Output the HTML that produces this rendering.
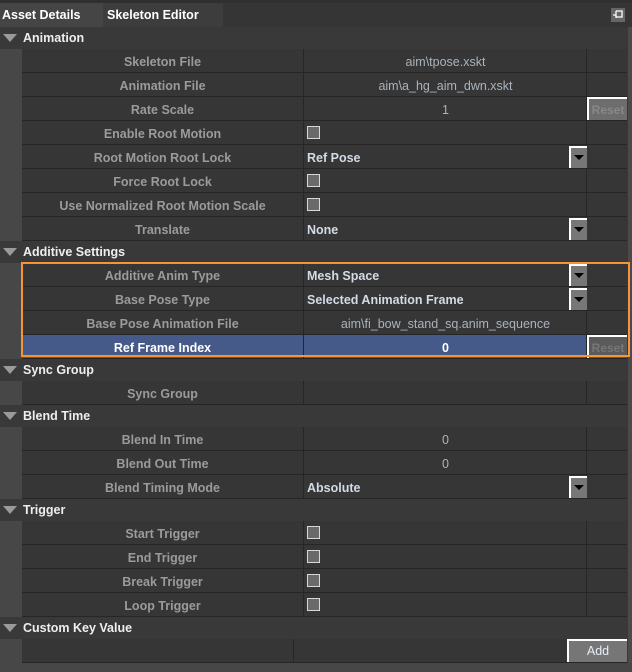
<!DOCTYPE html>
<html><head><style>
*{margin:0;padding:0;box-sizing:border-box}
body{width:632px;height:672px;background:#383838;font-family:"Liberation Sans","DejaVu Sans",sans-serif;font-size:12.5px;position:relative;overflow:hidden}
.a{position:absolute}
.tabs{left:0;top:0;width:632px;height:27px;background:#2f2f2f}
.hdr{left:0;width:628px;height:22px;background:#393939;color:#eee;font-weight:bold;line-height:22px;padding-left:23px;font-size:12.5px}
.hdr:before{content:"";position:absolute;left:3px;top:7px;border-left:7px solid transparent;border-right:7px solid transparent;border-top:8px solid #9a9a9a}
.gut{left:0;width:22px;background:#474747}
.row{left:22px;width:605px;height:24px;border-bottom:1px solid #262626;background:#363636}
.lab{position:absolute;left:0;width:282px;top:0;height:23px;line-height:26px;text-align:center;color:#9b9b9b;border-right:1px solid #262626;font-weight:bold}
.val{position:absolute;left:283px;width:282px;top:0;height:23px;line-height:26px;color:#a9b3bd;border-right:1px solid #262626}
.c{text-align:center}
.v{padding-left:2px;color:#d2dbe6;font-weight:bold}
.cb{position:absolute;left:2px;top:5px;width:13px;height:13px;background:#6a6a6a;border:1px solid #d8d8d8}
.dd{position:absolute;left:264px;top:1px;width:18px;height:22px;background:#777;border-left:2px solid #fff;border-top:2px solid #fff}
.dd:after{content:"";position:absolute;left:3px;top:7px;border-left:5px solid transparent;border-right:5px solid transparent;border-top:5px solid #000}
.rs{position:absolute;left:565px;top:0;width:40px;height:23px;background:#6d6d6d;border-left:2px solid #fff;border-top:2px solid #fff;color:#888;font-weight:bold;line-height:23px;text-align:center;font-size:12px}
.sel{background:#465a8a}
.sel .lab{color:#fff}
.sel .val{color:#fff;font-weight:bold}
</style></head><body>
<div class="a tabs"></div>
<div class="a" style="left:0;top:3px;width:103px;height:24px;background:#454545;color:#fff;font-weight:bold;line-height:24px;padding-left:2px">Asset Details</div>
<div class="a" style="left:103px;top:3px;width:120px;height:24px;background:#3d3d3d;color:#fff;font-weight:bold;line-height:24px;padding-left:4px">Skeleton Editor</div>
<div class="a" style="left:223px;top:3px;width:409px;height:24px;background:#353535"></div>
<div class="a" style="left:611px;top:8px;width:14px;height:14px;background:#666"><svg width="14" height="14"><path d="M2 7H5M5 3V10M5 3H11V9H5" stroke="#fff" stroke-width="1.3" fill="none"/></svg></div>
<div class="a" style="left:628px;top:27px;width:4px;height:645px;background:#4a4a4a"></div>

<div class="a hdr" style="top:27px">Animation</div>
<div class="a gut" style="top:49px;height:192px"></div>
<div class="a row" style="top:49px"><div class="lab">Skeleton File</div><div class="val c">aim\tpose.xskt</div></div>
<div class="a row" style="top:73px"><div class="lab">Animation File</div><div class="val c">aim\a_hg_aim_dwn.xskt</div></div>
<div class="a row" style="top:97px"><div class="lab">Rate Scale</div><div class="val c">1</div><div class="rs">Reset</div></div>
<div class="a row" style="top:121px"><div class="lab">Enable Root Motion</div><div class="val"><div class="cb"></div></div></div>
<div class="a row" style="top:145px"><div class="lab">Root Motion Root Lock</div><div class="val v">Ref Pose<div class="dd"></div></div></div>
<div class="a row" style="top:169px"><div class="lab">Force Root Lock</div><div class="val"><div class="cb"></div></div></div>
<div class="a row" style="top:193px"><div class="lab">Use Normalized Root Motion Scale</div><div class="val"><div class="cb"></div></div></div>
<div class="a row" style="top:217px"><div class="lab">Translate</div><div class="val v">None<div class="dd"></div></div></div>

<div class="a hdr" style="top:241px">Additive Settings</div>
<div class="a gut" style="top:263px;height:96px"></div>
<div class="a row" style="top:263px"><div class="lab">Additive Anim Type</div><div class="val v">Mesh Space<div class="dd"></div></div></div>
<div class="a row" style="top:287px"><div class="lab">Base Pose Type</div><div class="val v">Selected Animation Frame<div class="dd"></div></div></div>
<div class="a row" style="top:311px"><div class="lab">Base Pose Animation File</div><div class="val c">aim\fi_bow_stand_sq.anim_sequence</div></div>
<div class="a row sel" style="top:335px"><div class="lab">Ref Frame Index</div><div class="val c">0</div><div class="rs" style="background:#5a5a5a;color:#777">Reset</div></div>
<div class="a" style="left:21px;top:262px;width:609px;height:95px;border:2px solid #f7943a"></div>

<div class="a hdr" style="top:359px">Sync Group</div>
<div class="a gut" style="top:381px;height:24px"></div>
<div class="a row" style="top:381px"><div class="lab">Sync Group</div><div class="val"></div></div>

<div class="a hdr" style="top:405px">Blend Time</div>
<div class="a gut" style="top:427px;height:72px"></div>
<div class="a row" style="top:427px"><div class="lab">Blend In Time</div><div class="val c">0</div></div>
<div class="a row" style="top:451px"><div class="lab">Blend Out Time</div><div class="val c">0</div></div>
<div class="a row" style="top:475px"><div class="lab">Blend Timing Mode</div><div class="val v">Absolute<div class="dd"></div></div></div>

<div class="a hdr" style="top:499px">Trigger</div>
<div class="a gut" style="top:521px;height:96px"></div>
<div class="a row" style="top:521px"><div class="lab">Start Trigger</div><div class="val"><div class="cb"></div></div></div>
<div class="a row" style="top:545px"><div class="lab">End Trigger</div><div class="val"><div class="cb"></div></div></div>
<div class="a row" style="top:569px"><div class="lab">Break Trigger</div><div class="val"><div class="cb"></div></div></div>
<div class="a row" style="top:593px"><div class="lab">Loop Trigger</div><div class="val"><div class="cb"></div></div></div>

<div class="a hdr" style="top:617px">Custom Key Value</div>
<div class="a gut" style="top:639px;height:24px"></div>
<div class="a row" style="top:639px"><div class="lab" style="width:272px"></div></div>
<div class="a" style="left:567px;top:639px;width:60px;height:23px;background:#767676;border-left:2px solid #fff;border-top:2px solid #fff;color:#e6eef8;line-height:21px;text-align:center">Add</div>
<div class="a" style="left:0;top:663px;width:632px;height:9px;background:#474747"></div>
</body></html>
